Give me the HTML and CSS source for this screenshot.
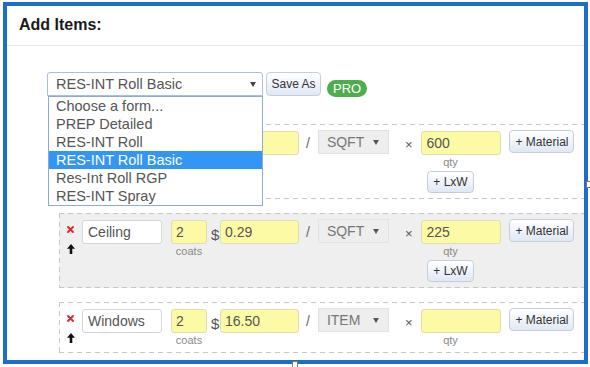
FILE: index.html
```html
<!DOCTYPE html>
<html>
<head>
<meta charset="utf-8">
<link rel="stylesheet" href="styles.css">
</head>
<body>
<div class="frame">
  <div class="header">Add Items:</div>
  <div class="content">
    <div class="form-bar">
      <div class="select-wrap">
        <div class="select"><span>RES-INT Roll Basic</span><span class="caret"></span></div>
        <ul class="dropdown">
          <li>Choose a form...</li>
          <li>PREP Detailed</li>
          <li>RES-INT Roll</li>
          <li class="active">RES-INT Roll Basic</li>
          <li>Res-Int Roll RGP</li>
          <li>RES-INT Spray</li>
        </ul>
      </div>
      <button class="btn save">Save As</button>
      <span class="pro">PRO</span>
    </div>

    <div class="rows">
      <div class="row">
        <div class="icons">
          <svg class="del" width="7" height="7" viewBox="0 0 7 7"><path d="M1 1L6 6M6 1L1 6" stroke="#e8202a" stroke-width="1.8" stroke-linecap="round"/></svg>
          <svg class="up" width="8" height="10" viewBox="0 0 8 10"><path d="M4 0L8 4.8H5.3V10H2.7V4.8H0Z" fill="#111"/></svg>
        </div>
        <div class="field name"></div>
        <div class="col coats"><div class="field yellow"></div><div class="lbl"></div></div>
        <span class="sym dollar"></span>
        <div class="field yellow price"></div>
        <span class="sym slash">/</span>
        <div class="unit"><span>SQFT</span><span class="caret"></span></div>
        <span class="sym times">×</span>
        <div class="col qty"><div class="field yellow">600</div><div class="under"><div class="lbl">qty</div><button class="btn lxw">+ LxW</button></div></div>
        <button class="btn material">+ Material</button>
      </div>

      <div class="row gray">
        <div class="icons">
          <svg class="del" width="7" height="7" viewBox="0 0 7 7"><path d="M1 1L6 6M6 1L1 6" stroke="#e8202a" stroke-width="1.8" stroke-linecap="round"/></svg>
          <svg class="up" width="8" height="10" viewBox="0 0 8 10"><path d="M4 0L8 4.8H5.3V10H2.7V4.8H0Z" fill="#111"/></svg>
        </div>
        <div class="field name">Ceiling</div>
        <div class="col coats"><div class="field yellow">2</div><div class="lbl">coats</div></div>
        <span class="sym dollar">$</span>
        <div class="field yellow price">0.29</div>
        <span class="sym slash">/</span>
        <div class="unit"><span>SQFT</span><span class="caret"></span></div>
        <span class="sym times">×</span>
        <div class="col qty"><div class="field yellow">225</div><div class="under"><div class="lbl">qty</div><button class="btn lxw">+ LxW</button></div></div>
        <button class="btn material">+ Material</button>
      </div>

      <div class="row">
        <div class="icons">
          <svg class="del" width="7" height="7" viewBox="0 0 7 7"><path d="M1 1L6 6M6 1L1 6" stroke="#e8202a" stroke-width="1.8" stroke-linecap="round"/></svg>
          <svg class="up" width="8" height="10" viewBox="0 0 8 10"><path d="M4 0L8 4.8H5.3V10H2.7V4.8H0Z" fill="#111"/></svg>
        </div>
        <div class="field name">Windows</div>
        <div class="col coats"><div class="field yellow">2</div><div class="lbl">coats</div></div>
        <span class="sym dollar">$</span>
        <div class="field yellow price">16.50</div>
        <span class="sym slash">/</span>
        <div class="unit"><span>ITEM</span><span class="caret"></span></div>
        <span class="sym times">×</span>
        <div class="col qty"><div class="field yellow"></div><div class="under"><div class="lbl">qty</div></div></div>
        <button class="btn material">+ Material</button>
      </div>
    </div>
  </div>
</div>
<span class="handle h-bottom"></span>
<span class="handle h-right"></span>
</body>
</html>
```

FILE: styles.css
```css
html, body {
  margin: 0;
  padding: 0;
  background: #fff;
  font-family: "Liberation Sans", Arial, sans-serif;
}

.frame {
  margin: 2px 0 0 3px;
  width: 585px;
  height: 362px;
  box-sizing: border-box;
  border: 4px solid #1d6ec6;
  background: #fff;
  overflow: hidden;
  position: relative;
}

.header {
  height: 29px;
  padding: 10px 0 0 12px;
  border-bottom: 1px solid #e8e8e8;
  font-size: 16px;
  font-weight: bold;
  color: #1a1a1a;
  line-height: 18px;
}

.content {
  padding: 26px 0 0 40px;
}

.form-bar {
  display: flex;
  align-items: flex-start;
}

.select-wrap {
  position: relative;
}

.select {
  box-sizing: border-box;
  width: 216px;
  height: 24px;
  border: 1px solid #a9bfdf;
  border-radius: 3px 3px 0 0;
  padding: 0 6px 0 8px;
  display: flex;
  align-items: center;
  justify-content: space-between;
  font-size: 14.5px;
  color: #555;
  background: #fff;
}

.caret {
  width: 0;
  height: 0;
  border-left: 3px solid transparent;
  border-right: 3px solid transparent;
  border-top: 5px solid #444;
}

.dropdown {
  position: absolute;
  top: 24px;
  left: 1px;
  width: 215px;
  box-sizing: border-box;
  margin: 0;
  padding: 0;
  list-style: none;
  background: #fff;
  border: 1px solid #8ea9d6;
  z-index: 5;
}

.dropdown li {
  height: 18px;
  line-height: 18px;
  padding-left: 7px;
  font-size: 14.5px;
  color: #555;
}

.dropdown li.active {
  background: #3396f5;
  color: #fff;
}

.btn {
  box-sizing: border-box;
  border: 1px solid #c6ced9;
  border-radius: 4px;
  background: linear-gradient(#ffffff, #dfe8f4);
  font-family: "Liberation Sans", Arial, sans-serif;
  font-size: 12px;
  color: #333;
  padding: 0;
  margin: 0;
}

.save {
  width: 55px;
  height: 24px;
  margin-left: 3px;
}

.pro {
  margin: 8px 0 0 6px;
  height: 17px;
  line-height: 17px;
  padding: 0 6px;
  border-radius: 9px;
  background: #4cae4c;
  color: #fff;
  font-size: 13px;
}

.rows {
  margin: 27px 0 0 12px;
}

.row {
  width: 540px;
  box-sizing: border-box;
  display: flex;
  align-items: flex-start;
  padding: 7px 0 6px 8px;
  margin-bottom: 14px;
  background-image:
    repeating-linear-gradient(90deg, #c6c6c6 0 5px, transparent 5px 9px),
    repeating-linear-gradient(90deg, #c6c6c6 0 5px, transparent 5px 9px),
    repeating-linear-gradient(180deg, #c6c6c6 0 5px, transparent 5px 9px);
  background-size: 100% 1px, 100% 1px, 1px 100%;
  background-position: left top, left bottom, left top;
  background-repeat: no-repeat;
}

.row.gray {
  background-color: #efefef;
}

.icons {
  width: 8px;
  margin-right: 7px;
  display: flex;
  flex-direction: column;
}

.del {
  margin-top: 6px;
}

.up {
  margin-top: 11px;
}

.field {
  box-sizing: border-box;
  height: 24px;
  line-height: 22px;
  border: 1px solid #d6d6d6;
  border-radius: 3px;
  background: #fff;
  padding-left: 4px;
  font-size: 14px;
  color: #555;
  white-space: nowrap;
}

.field.yellow {
  background: #fdfaa6;
  border-color: #e0ddb0;
}

.name {
  width: 80px;
  padding-left: 5px;
  margin-right: 9px;
}

.col {
  display: flex;
  flex-direction: column;
}

.coats {
  width: 36px;
  align-items: center;
}

.coats .field {
  width: 36px;
}

.lbl {
  height: 14px;
  line-height: 14px;
  font-size: 11px;
  color: #888;
  text-align: center;
}

.sym {
  font-size: 14px;
  color: #555;
  line-height: 16px;
}

.dollar {
  width: 8px;
  margin: 7px 1px 0 4px;
  font-size: 15px;
}

.price {
  width: 79px;
}

.slash {
  margin: 4px 8px 0 7px;
  color: #666;
}

.unit {
  box-sizing: border-box;
  width: 71px;
  height: 24px;
  margin-top: -1px;
  border: 1px solid #e2e2e2;
  background: #eeeeee;
  display: flex;
  align-items: center;
  justify-content: space-between;
  padding: 0 9px 0 8px;
  font-size: 14px;
  color: #777;
}

.unit .caret {
  border-top-color: #555;
}

.times {
  margin: 6px 9px 0 16px;
  font-size: 13px;
}

.qty {
  width: 80px;
}

.qty .field {
  width: 80px;
}

.under {
  width: 58px;
  display: flex;
  flex-direction: column;
  align-items: center;
}

.lxw {
  width: 47px;
  height: 22px;
  margin-top: 2px;
}

.material {
  width: 65px;
  height: 23px;
  margin: -1px 0 0 8px;
}

.handle {
  position: absolute;
  width: 4px;
  height: 5px;
  background: #fff;
  border: 1px solid #777;
}

.h-bottom {
  left: 292px;
  top: 361px;
}

.h-right {
  left: 586px;
  top: 181px;
}
```
